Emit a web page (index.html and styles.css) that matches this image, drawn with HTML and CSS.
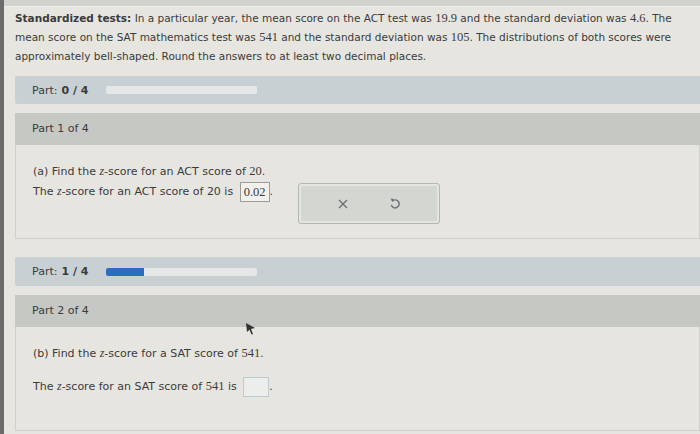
FILE: index.html
```html
<!DOCTYPE html>
<html lang="en">
<head>
    <meta charset="UTF-8">
    <meta name="viewport" content="width=device-width, initial-scale=1.0">
    <title>Standardized tests</title>
    <link rel="stylesheet" href="styles.css">
</head>
<body>
    <div class="topbar"></div>

    <div class="intro">
        <span class="ln"><b>Standardized tests:</b> In a particular year, the mean score on the ACT test was <span class="num">19.9</span> and the standard deviation was <span class="num">4.6</span>. The</span>
        <span class="ln">mean score on the SAT mathematics test was <span class="num">541</span> and the standard deviation was <span class="num">105</span>. The distributions of both scores were</span>
        <span class="ln">approximately bell-shaped. Round the answers to at least two decimal places.</span>
    </div>

    <div class="part-bar">
        Part: <b>0 / 4</b>
        <div class="track"><div class="fill" style="width: 0%"></div></div>
    </div>

    <div class="part">
        <div class="part-head">Part 1 of 4</div>
        <div class="part-body first">
            <p class="q">(a) Find the <i class="var">z</i>-score for an ACT score of <span class="num">20</span>.</p>
            <div class="answer-row">
                <p>The <i class="var">z</i>-score for an ACT score of 20 is <span class="ans filled">0.02</span>.</p>
                <div class="tools">
                    <span class="tool">
                        <svg width="12" height="12" viewBox="0 0 12 12"><path d="M2 2 L10 10 M10 2 L2 10" stroke="#6b6e70" stroke-width="1.3" fill="none"/></svg>
                    </span>
                    <span class="tool">
                        <svg width="12" height="13" viewBox="0 0 12 13"><path d="M3.2 4.2 A4 4 0 1 1 2.3 8" stroke="#6b6e70" stroke-width="1.4" fill="none"/><path d="M1.6 1.6 L4.8 2 L3.4 5 Z" fill="#6b6e70"/></svg>
                    </span>
                </div>
            </div>
        </div>
    </div>

    <div class="part-bar second">
        Part: <b>1 / 4</b>
        <div class="track"><div class="fill" style="width: 25%"></div></div>
    </div>

    <div class="part">
        <div class="part-head">Part 2 of 4</div>
        <div class="part-body second">
            <p class="q">(b) Find the <i class="var">z</i>-score for a SAT score of <span class="num">541</span>.</p>
            <p class="line">The <i class="var">z</i>-score for an SAT score of <span class="num">541</span> is <span class="ans"></span>.</p>
        </div>
    </div>

    <span class="cursor">
        <svg width="12" height="14" viewBox="0 0 12 14"><path d="M1 1 L10 6 L6 7 L8 12 L6.5 12.6 L4.5 7.8 L2 10 Z" fill="#333"/></svg>
    </span>
</body>
</html>
```

FILE: styles.css
```css
body {
    font-family: "DejaVu Sans", Verdana, sans-serif;
    font-size: 11px;
    color: #3a3b3b;
    margin: 0;
    padding: 0 0 0 15px;
    background-color: #e7e5e0;
    border-left: 4px solid #6a6b6a;
    min-height: 434px;
    box-sizing: border-box;
    position: relative;
    overflow: hidden;
}
.topbar {
    height: 6px;
    margin-left: -15px;
    background: #d2d3cf;
    border-bottom: 1px solid #f0efeb;
}
.intro {
    margin: 0 0 0 -4px;
    padding: 2px 0 0;
    line-height: 19px;
    font-size: 10.5px;
}
.ln {
    display: block;
    white-space: nowrap;
}
.num {
    font-family: "Liberation Serif", "Times New Roman", serif;
    font-size: 12.5px;
    line-height: 1;
}
.var {
    font-family: "Liberation Serif", "Times New Roman", serif;
    font-size: 12px;
    line-height: 1;
}
.part-bar {
    margin: 10px 0 0 -4px;
    height: 28px;
    background: #c9d0d3;
    display: flex;
    align-items: center;
    padding-left: 17px;
    border-radius: 2px 0 0 2px;
}
.part-bar.second {
    margin-top: 18px;
    height: 29px;
}
.part-bar b { margin-left: 4px; }
.track {
    width: 151px;
    height: 8px;
    margin-left: 18px;
    background: #e6e8e8;
    border-radius: 2px;
    overflow: hidden;
}
.fill {
    height: 100%;
    background: #2b6cbf;
}
.part {
    margin: 9px 0 0 -4px;
}
.part-head {
    height: 32px;
    line-height: 32px;
    padding-left: 17px;
    background: #c6c8c4;
}
.part-body {
    border: 1px solid #d0d0cb;
    border-top: none;
    padding: 20px 17px 0;
}
.part-body.first { height: 73px; }
.part-body.second { height: 83px; padding-top: 20px; }
.q {
    margin: 0;
    line-height: 14px;
}
.answer-row {
    display: flex;
    align-items: flex-start;
    margin-top: 2px;
}
.answer-row p {
    margin: 1px 0 0;
}
.line {
    margin: 16px 0 0;
}
.ans {
    display: inline-block;
    min-width: 18px;
    height: 18px;
    line-height: 18px;
    border: 1px solid #b9cdd2;
    background: #eceeec;
    vertical-align: middle;
    margin-left: 3px;
    padding: 0 3px;
    font-family: "Liberation Serif", "Times New Roman", serif;
    font-size: 12.5px;
    text-align: center;
}
.ans.filled {
    border-color: #9a9c9a;
    background: #f1f0ec;
}
.tools {
    margin: 2px 0 0 25px;
    width: 142px;
    height: 41px;
    box-sizing: border-box;
    border: 1px solid #b5b7b4;
    border-radius: 3px;
    background: #d4d6d2;
    box-shadow: inset 0 0 0 2px #e4e4e0;
    display: flex;
    justify-content: space-around;
    align-items: center;
    padding: 0 18px;
}
.tool { display: flex; }
.cursor {
    position: absolute;
    left: 241px;
    top: 322px;
}
```
